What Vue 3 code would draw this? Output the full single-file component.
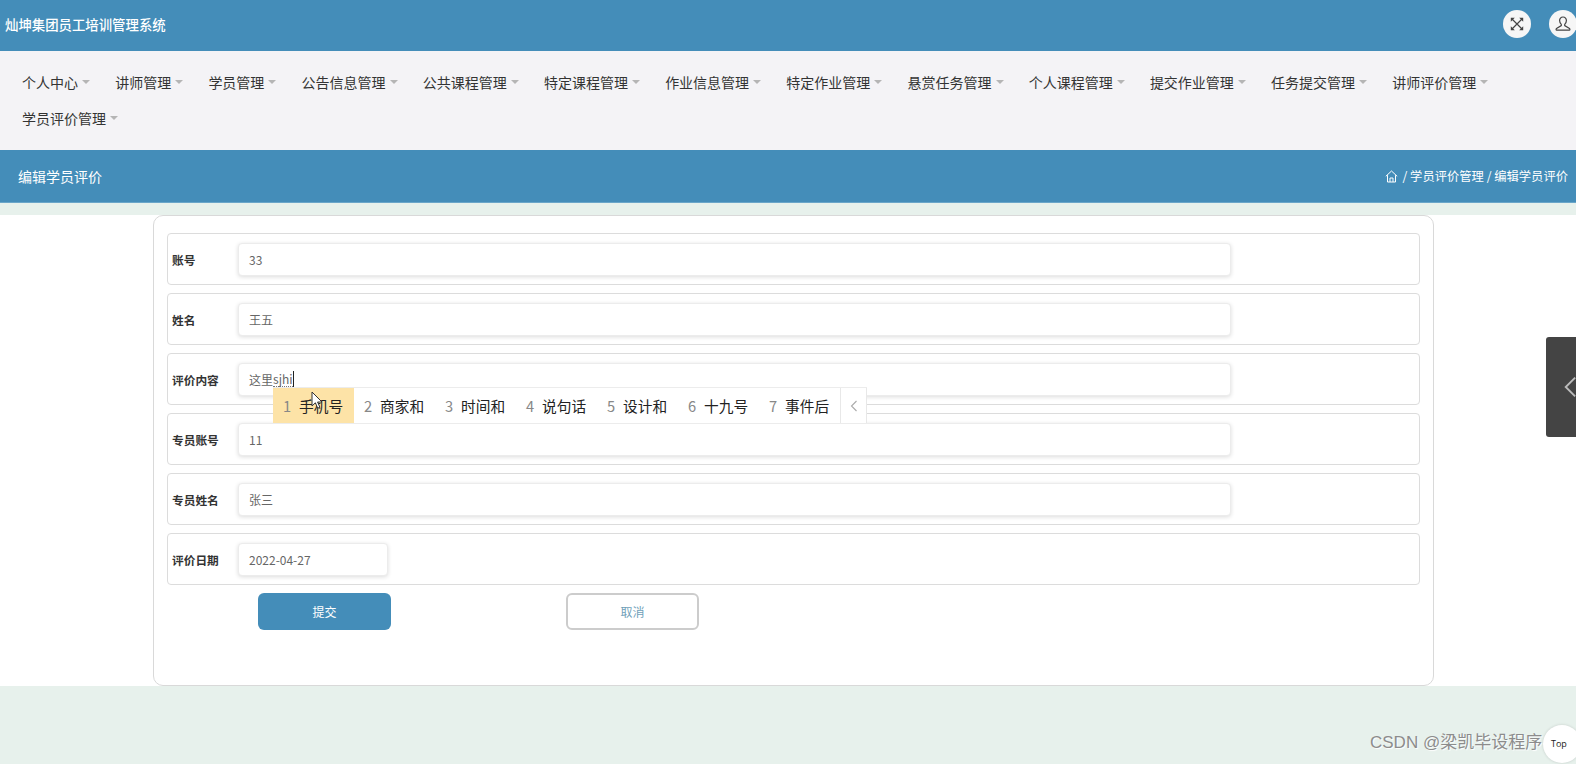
<script setup>
const menu = ['个人中心','讲师管理','学员管理','公告信息管理','公共课程管理','特定课程管理','作业信息管理','特定作业管理','悬赏任务管理','个人课程管理','提交作业管理','任务提交管理','讲师评价管理','学员评价管理']
const fields = [
  { label: '账号', value: '33' },
  { label: '姓名', value: '王五' },
  { label: '评价内容', value: '这里', composing: 'sjhi' },
  { label: '专员账号', value: '11' },
  { label: '专员姓名', value: '张三' },
  { label: '评价日期', value: '2022-04-27', short: true }
]
const candidates = ['手机号','商家和','时间和','说句话','设计和','十九号','事件后']
</script>

<template>
  <div class="page">
    <header class="topbar">
      <div class="brand">灿坤集团员工培训管理系统</div>
      <div class="tools">
        <span class="tool">
          <svg width="16" height="16" viewBox="0 0 16 16" fill="none" stroke="#444" stroke-width="1.2">
            <path d="M3 3l10 10M13 3L3 13" />
            <path d="M2 6V2h4M10 2h4v4M14 10v4h-4M6 14H2v-4" stroke-width="0" />
            <path d="M1.8 1.8h4L1.8 5.8zM14.2 1.8v4l-4-4zM14.2 14.2h-4l4-4zM1.8 14.2v-4l4 4z" fill="#444" stroke="none" />
          </svg>
        </span>
        <span class="tool">
          <svg width="18" height="18" viewBox="0 0 18 18" fill="none" stroke="#444" stroke-width="1.2">
            <path d="M9 2c-2.200 0-3.400 1.600-3.400 3.600 0 1.700.8 3 1.700 3.800v1.200L2.500 13.500c-.6.4-.6 1.700.2 1.700h12.600c.8 0 .8-1.300.2-1.700l-4.800-2.900V9.400c.9-.8 1.700-2.100 1.700-3.800C12.400 3.600 11.200 2 9 2z" />
          </svg>
        </span>
      </div>
    </header>

    <nav class="menu">
      <a v-for="item in menu" :key="item" class="menu-item">{{ item }}<i class="caret"></i></a>
    </nav>

    <section class="subbar">
      <h1 class="subtitle">编辑学员评价</h1>
      <div class="crumbs">
        <svg width="13" height="13" viewBox="0 0 13 13" fill="none" stroke="#fff" stroke-width="1">
          <path d="M.8 6.300 6.500 1l5.700 5.300M2.500 5.200V12h8V5.200M5 12V8h3v4" />
        </svg>
        <span>/ 学员评价管理 / 编辑学员评价</span>
      </div>
    </section>

    <main class="content">
      <form class="card" @submit.prevent>
        <div v-for="f in fields" :key="f.label" class="row">
          <label class="label">{{ f.label }}</label>
          <div class="field" :class="{ short: f.short }">
            {{ f.value }}<span v-if="f.composing" class="composing">{{ f.composing }}</span><span v-if="f.composing" class="text-caret"></span>
          </div>
        </div>
        <div class="actions">
          <button type="button" class="btn primary">提交</button>
          <button type="button" class="btn ghost">取消</button>
        </div>
      </form>
    </main>

    <div class="ime">
      <div v-for="(c, i) in candidates" :key="c" class="cand" :class="{ active: i === 0 }">
        <span class="num">{{ i + 1 }}</span>{{ c }}
      </div>
      <div class="ime-arrow">
        <svg width="8" height="12" viewBox="0 0 8 12" fill="none" stroke="#aaa" stroke-width="1.100"><path d="M6.500 1 1.500 6l5 5" /></svg>
      </div>
    </div>

    <svg class="pointer" width="12" height="19" viewBox="0 0 12 19">
      <path d="M1 1v14l3.400-3.200 2.300 5.400 2.200-1-2.300-5.200H11z" fill="#fff" stroke="#333" stroke-width="1" />
    </svg>

    <div class="side-tab">
      <svg width="14" height="28" viewBox="0 0 14 28" fill="none" stroke="#bbb" stroke-width="2.200"><path d="M13 3 2 14l11 11" /></svg>
    </div>

    <div class="to-top">Top</div>
    <div class="watermark">CSDN @梁凯毕设程序</div>
  </div>
</template>

<style>
html, body { margin: 0; overflow: hidden; }
</style>

<style scoped>
.page {
  position: relative;
  width: 1576px;
  height: 764px;
  overflow: hidden;
  background: #e7f1ec;
  font-family: "Noto Sans CJK SC", "Open Sans", sans-serif;
  color: #333;
}
.topbar {
  height: 51px;
  background: #448db9;
  display: flex;
  align-items: center;
  justify-content: space-between;
  padding-left: 5px;
  overflow: hidden;
}
.brand {
  color: #fff;
  font-size: 13.4px;
  font-weight: 500;
  margin-top: -3px;
}
.tools {
  display: flex;
  gap: 18px;
  margin-right: -1px;
  margin-top: -3px;
}
.tool {
  width: 28px;
  height: 28px;
  border-radius: 50%;
  background: #f6f6f6;
  display: flex;
  align-items: center;
  justify-content: center;
}
.menu {
  height: 99px;
  box-sizing: border-box;
  background: #f4f3f6;
  padding: 13px 22px 0;
  display: flex;
  flex-wrap: wrap;
  align-content: flex-start;
}
.menu-item {
  height: 36px;
  line-height: 36px;
  font-size: 14px;
  color: #333;
  margin-right: 25px;
  display: flex;
  align-items: center;
}
.caret {
  width: 0;
  height: 0;
  margin-left: 4px;
  margin-right: 0.2px;
  border-left: 4px solid transparent;
  border-right: 4px solid transparent;
  border-top: 4px solid #b5b5b5;
}
.subbar {
  height: 53px;
  box-sizing: border-box;
  background: #448db9;
  border-bottom: 1px solid #6aa6c9;
  display: flex;
  align-items: center;
  justify-content: space-between;
  padding: 0 8px 0 18px;
  color: #fff;
}
.subtitle {
  margin: 0;
  font-size: 14px;
  font-weight: 400;
}
.crumbs {
  display: flex;
  align-items: center;
  gap: 5px;
  font-size: 12.300px;
}
.content {
  margin-top: 12px;
  height: 471px;
  background: #fff;
  padding-left: 153px;
}
.card {
  box-sizing: border-box;
  width: 1281px;
  height: 471px;
  border: 1px solid #d9d9d9;
  border-radius: 10px;
  padding: 17px 13px 0;
  background: #fff;
}
.row {
  height: 52px;
  box-sizing: border-box;
  border: 1px solid #dcdcdc;
  border-radius: 4px;
  margin-bottom: 8px;
  display: flex;
  align-items: center;
}
.label {
  width: 70px;
  padding-left: 4px;
  box-sizing: border-box;
  font-size: 11.700px;
  font-weight: 700;
  color: #333;
}
.field {
  width: 993px;
  height: 33px;
  line-height: 33px;
  box-sizing: border-box;
  border: 1px solid #ececec;
  border-radius: 4px;
  background: #fff;
  box-shadow: 0 1px 4px rgba(0, 0, 0, 0.14);
  padding-left: 10px;
  font-size: 12px;
  color: #666;
  display: flex;
  align-items: center;
}
.field.short { width: 150px; }
.composing {
  border-bottom: 1px dotted #777;
  line-height: 14px;
}
.text-caret {
  width: 1px;
  height: 16px;
  background: #222;
}
.actions {
  display: flex;
  gap: 175px;
  padding-left: 91px;
  margin-top: 0;
}
.btn {
  width: 133px;
  height: 37px;
  border-radius: 6px;
  font-family: inherit;
  font-size: 12px;
  padding: 0;
}
.primary {
  background: #448db9;
  border: 0;
  color: #fff;
}
.ghost {
  background: #fff;
  border: 2px solid #ccc;
  color: #6f9fb9;
}
.ime {
  position: absolute;
  left: 273px;
  top: 387px;
  width: 594px;
  height: 37px;
  box-sizing: border-box;
  background: #fff;
  border-top: 1px solid #ececec;
  border-bottom: 1px solid #ececec;
  display: flex;
  font-size: 14.700px;
  color: #222;
}
.cand {
  width: 81px;
  flex: none;
  box-sizing: border-box;
  padding-left: 10px;
  display: flex;
  align-items: center;
  white-space: nowrap;
}
.cand.active { background: #fde3a7; }
.num {
  color: #888;
  width: 16px;
}
.ime-arrow {
  margin-left: -0px;
  flex: 1;
  border-left: 1px solid #e8e8e8;
  border-right: 1px solid #e8e8e8;
  display: flex;
  align-items: center;
  justify-content: center;
}
.pointer {
  position: absolute;
  left: 311px;
  top: 391px;
}
.side-tab {
  position: absolute;
  left: 1546px;
  top: 337px;
  width: 30px;
  height: 100px;
  background: #444;
  border-radius: 3px 0 0 3px;
  display: flex;
  align-items: center;
  padding-left: 18px;
  box-sizing: border-box;
}
.to-top {
  position: absolute;
  left: 1543px;
  top: 725px;
  width: 38px;
  height: 38px;
  border-radius: 50%;
  background: #fff;
  box-shadow: 0 0 3px rgba(0, 0, 0, 0.15);
  font-family: "Open Sans", sans-serif;
  font-size: 9px;
  line-height: 38px;
  padding-left: 8px;
  box-sizing: border-box;
  color: #222;
}
.watermark {
  position: absolute;
  left: 1370px;
  top: 731px;
  font-family: "Liberation Sans", "Noto Sans CJK SC", sans-serif;
  font-size: 17px;
  line-height: 24px;
  color: #8c8c8c;
  text-shadow: 1px 1px 1px #fff;
  white-space: nowrap;
}
</style>
